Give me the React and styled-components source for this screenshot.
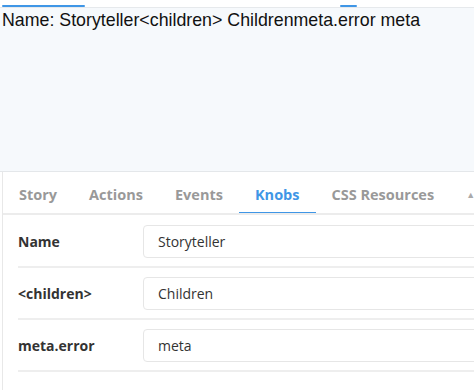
import React from 'react'
import styled, { createGlobalStyle } from 'styled-components'

const Global = createGlobalStyle`
  html, body {
    margin: 0;
    padding: 0;
    background: #fff;
    width: 474px;
    height: 390px;
    overflow: hidden;
  }
  * { box-sizing: border-box; }
`

const Page = styled.div`
  width: 474px;
  height: 390px;
  display: flex;
  flex-direction: column;
  overflow: hidden;
  font-family: 'Open Sans', sans-serif;
`

const TopStrip = styled.div`
  height: 8px;
  padding-top: 5px;
  border-bottom: 1px solid #e6e9ec;
  position: relative;
  background: #fff;
`

const Progress = styled.div`
  position: absolute;
  top: 5px;
  left: ${({ left }) => left}px;
  width: ${({ width }) => width}px;
  height: 2px;
  background: #3f96e6;
  border-radius: 1px;
`

const Preview = styled.div`
  height: 164px;
  background: #f6f9fc;
  border-bottom: 1px solid #e4e7ea;
  padding-left: 2px;
  padding-top: 1px;
  font-family: 'Liberation Sans', Arial, sans-serif;
  font-size: 17.8px;
  line-height: 22px;
  color: #111;
`

const Panel = styled.div`
  flex: 1;
  margin-left: 2px;
  border-left: 1px solid #e8e8e8;
  background: #fff;
`

const Tabs = styled.div`
  display: flex;
  height: 43px;
  border-bottom: 2px solid #ececec;
  white-space: nowrap;
  overflow: hidden;
`

const Tab = styled.div`
  position: relative;
  padding: 3px 16px 0;
  display: flex;
  align-items: center;
  font-size: 14.5px;
  font-weight: 700;
  color: ${({ active }) => (active ? '#3f96e6' : '#999')};

  &::after {
    content: '';
    display: ${({ active }) => (active ? 'block' : 'none')};
    position: absolute;
    left: 0;
    right: 0;
    bottom: -2px;
    height: 3px;
    background: #3f96e6;
  }
`

const Arrow = styled.div`
  display: flex;
  align-items: center;
  padding: 3px 0 0 16px;
  font-size: 9px;
  color: #aaa;
`

const Rows = styled.div`
  padding-left: 15px;
  padding-top: 1px;
`

const Row = styled.div`
  display: flex;
  align-items: center;
  padding: 9px 0 8px;
  border-bottom: 2px solid #eeeeee;
`

const Label = styled.div`
  width: 125px;
  flex-shrink: 0;
  font-size: 14px;
  font-weight: 700;
  color: #333;
`

const Field = styled.div`
  flex: 1;
  height: 33px;
  display: flex;
  align-items: center;
  padding-left: 14px;
  margin-right: -10px;
  border: 1px solid #e6e6e6;
  border-radius: 4px;
  background: #fff;
  font-size: 14px;
  color: #333;
`

const knobs = [
  { label: 'Name', value: 'Storyteller' },
  { label: '<children>', value: 'Children' },
  { label: 'meta.error', value: 'meta' },
]

const tabs = ['Story', 'Actions', 'Events', 'Knobs', 'CSS Resources']

export default function App() {
  return (
    <Page>
      <Global />
      <TopStrip>
        <Progress left={2} width={83} />
        <Progress left={340} width={17} />
      </TopStrip>
      <Preview>Name: Storyteller&lt;children&gt; Childrenmeta.error meta</Preview>
      <Panel>
        <Tabs>
          {tabs.map((t) => (
            <Tab key={t} active={t === 'Knobs'}>{t}</Tab>
          ))}
          <Arrow>▲</Arrow>
        </Tabs>
        <Rows>
          {knobs.map((k) => (
            <Row key={k.label}>
              <Label>{k.label}</Label>
              <Field>{k.value}</Field>
            </Row>
          ))}
        </Rows>
      </Panel>
    </Page>
  )
}
